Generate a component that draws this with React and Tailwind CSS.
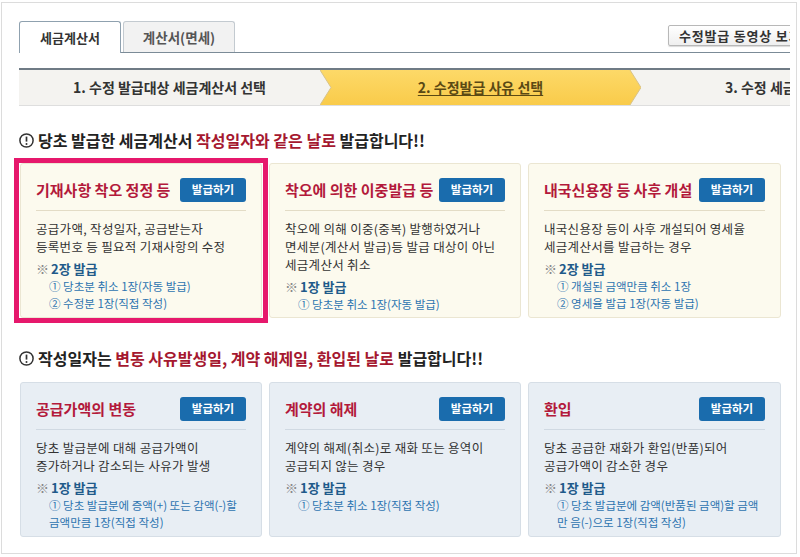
import React from 'react';

const rowOne = [
  {
    title: '기재사항 착오 정정 등',
    body: ['공급가액, 작성일자, 공급받는자', '등록번호 등 필요적 기재사항의 수정'],
    count: '2장 발급',
    items: ['① 당초분 취소 1장(자동 발급)', '② 수정분 1장(직접 작성)'],
    picked: true,
  },
  {
    title: '착오에 의한 이중발급 등',
    body: ['착오에 의해 이중(중복) 발행하였거나', '면세분(계산서 발급)등 발급 대상이 아닌', '세금계산서 취소'],
    count: '1장 발급',
    items: ['① 당초분 취소 1장(자동 발급)'],
  },
  {
    title: '내국신용장 등 사후 개설',
    body: ['내국신용장 등이 사후 개설되어 영세율', '세금계산서를 발급하는 경우'],
    count: '2장 발급',
    items: ['① 개설된 금액만큼 취소 1장', '② 영세율 발급 1장(자동 발급)'],
  },
];

const rowTwo = [
  {
    title: '공급가액의 변동',
    body: ['당초 발급분에 대해 공급가액이', '증가하거나 감소되는 사유가 발생'],
    count: '1장 발급',
    items: ['① 당초 발급분에 증액(+) 또는 감액(-)할', '금액만큼 1장(직접 작성)'],
  },
  {
    title: '계약의 해제',
    body: ['계약의 해제(취소)로 재화 또는 용역이', '공급되지 않는 경우'],
    count: '1장 발급',
    items: ['① 당초분 취소 1장(직접 작성)'],
  },
  {
    title: '환입',
    body: ['당초 공급한 재화가 환입(반품)되어', '공급가액이 감소한 경우'],
    count: '1장 발급',
    items: ['① 당초 발급분에 감액(반품된 금액)할 금액', '만 음(-)으로 1장(직접 작성)'],
  },
];

const NoticeIcon = () => (
  <svg width="15" height="15" viewBox="0 0 15 15" className="shrink-0">
    <circle cx="7.5" cy="7.5" r="6.6" fill="none" stroke="#333" strokeWidth="1.5" />
    <line x1="7.5" y1="3.6" x2="7.5" y2="8.6" stroke="#333" strokeWidth="1.7" />
    <circle cx="7.5" cy="10.9" r="1" fill="#333" />
  </svg>
);

const Card = ({ card, tone }) => {
  const blue = tone === 'blue';
  return (
    <div className="relative">
      <div
        className={
          blue
            ? 'h-[155px] rounded-[3px] border border-[#d6dee6] bg-[#e8eef4] px-[15px] pt-[14px]'
            : 'h-[155px] rounded-[3px] border border-[#ebe6d2] bg-[#fcfaee] px-[15px] pt-[14px]'
        }
      >
        <div className="flex h-[24px] items-center justify-between">
          <span className="whitespace-nowrap text-[15px] font-bold text-[#b3193b]">{card.title}</span>
          <button className="h-[24px] w-[66px] shrink-0 rounded-[3px] bg-[#1a6cad] text-[11.5px] font-bold text-white">
            발급하기
          </button>
        </div>
        <div className={blue ? 'mt-[8px] border-t border-[#d0d9e2]' : 'mt-[8px] border-t border-[#e3dcc6]'} />
        <div className="mt-[9px] text-[12.5px] leading-[18px] tracking-[0.3px] text-[#333]">
          {card.body.map((line) => (
            <div key={line} className="whitespace-nowrap">{line}</div>
          ))}
        </div>
        <div className="mt-[3px] flex items-center gap-[2px] text-[13px] leading-[19px]">
          <span className="font-normal text-[#888]">※</span>
          <span className="font-bold text-[#1f5a8a]">{card.count}</span>
        </div>
        <div className="pl-[13px] text-[11.5px] leading-[17px] text-[#2d74b0]">
          {card.items.map((line) => (
            <div key={line} className="whitespace-nowrap">{line}</div>
          ))}
        </div>
      </div>
      {card.picked && (
        <div className="absolute -bottom-[5px] -left-[6px] -right-[6px] -top-[5px] border-[5px] border-[#e6186c]" />
      )}
    </div>
  );
};

const Heading = ({ children }) => (
  <div className="flex h-[24px] items-center gap-[4px]">
    <NoticeIcon />
    <span className="whitespace-nowrap text-[16px] font-bold text-[#222]">{children}</span>
  </div>
);

export default function App() {
  return (
    <div className="h-[557px] w-[800px] overflow-hidden bg-white pl-px pt-[2px] font-['Noto_Sans_CJK_KR','Noto_Sans',sans-serif]">
      <div className="h-[552px] w-[796px] border border-[#dcdcdc]">
        <div className="ml-[9px] w-[779px] overflow-hidden pl-[8px] pt-[18px]">
          {/* tabs */}
          <div className="flex h-[32px] items-end border-b border-[#7b8b97]">
            <div className="-mb-px flex h-[32px] w-[102px] shrink-0 items-center justify-center rounded-t-[3px] border border-b-0 border-[#8fa1af] bg-white text-[13px] font-bold text-[#333]">
              세금계산서
            </div>
            <div className="ml-[2px] flex h-[31px] w-[112px] shrink-0 items-center justify-center rounded-t-[3px] border border-b-0 border-[#c3cad0] bg-[#f2f2f2] text-[13.5px] font-bold text-[#555]">
              계산서(면세)
            </div>
            <div className="mb-[6px] ml-[433px] flex h-[21px] w-[150px] shrink-0 items-center whitespace-nowrap rounded-[2px] border border-[#b8b8b8] bg-gradient-to-b from-white to-[#efefef] pl-[10px] text-[13px] font-bold tracking-[0.8px] text-[#333] shadow-[0_1px_1px_rgba(0,0,0,0.15)]">
              수정발급 동영상 보기
            </div>
          </div>

          {/* steps */}
          <div className="mt-[15px] flex h-[38px] overflow-hidden border-b border-t-2 border-b-[#dedede] border-t-[#6f7b85] bg-[#f4f3f0]">
            <div className="flex w-[301px] shrink-0 items-center justify-center whitespace-nowrap text-[14px] font-bold text-[#333]">
              1. 수정 발급대상 세금계산서 선택
            </div>
            <div className="relative flex w-[321px] shrink-0 items-center justify-center">
              <svg className="absolute inset-0" width="321" height="35" viewBox="0 0 321 35">
                <defs>
                  <linearGradient id="stepYellow" x1="0" y1="0" x2="0" y2="1">
                    <stop offset="0" stopColor="#fdd968" />
                    <stop offset="1" stopColor="#f9cb4a" />
                  </linearGradient>
                </defs>
                <polygon points="0,0 310,0 321,17.5 310,35 0,35 11,17.5" fill="url(#stepYellow)" />
                <polyline points="0,0 11,17.5 0,35" fill="none" stroke="#d8c38a" strokeWidth="1" />
                <polyline points="310,0 321,17.5 310,35" fill="none" stroke="#d8c38a" strokeWidth="1" />
              </svg>
              <span className="relative whitespace-nowrap text-[14px] font-bold text-[#5a4914] underline underline-offset-2">
                2. 수정발급 사유 선택
              </span>
            </div>
            <div className="flex w-[300px] shrink-0 items-center whitespace-nowrap pl-[84px] text-[14px] font-bold text-[#333]">
              3. 수정 세금계산서 작성
            </div>
          </div>

          {/* same day */}
          <div className="mt-[22px]">
            <Heading>
              당초 발급한 세금계산서 <span className="text-[#a5182f]">작성일자와 같은 날로</span> 발급합니다!!
            </Heading>
          </div>
          <div className="ml-px mt-[11px] grid grid-cols-[242px_252px_253px] gap-[7px]">
            {rowOne.map((card) => (
              <Card key={card.title} card={card} tone="cream" />
            ))}
          </div>

          {/* changed day */}
          <div className="mt-[28px]">
            <Heading>
              작성일자는 <span className="text-[#a5182f]">변동 사유발생일, 계약 해제일, 환입된 날로</span> 발급합니다!!
            </Heading>
          </div>
          <div className="ml-px mt-[12px] grid grid-cols-[242px_252px_253px] gap-[7px]">
            {rowTwo.map((card) => (
              <Card key={card.title} card={card} tone="blue" />
            ))}
          </div>
        </div>
      </div>
    </div>
  );
}
